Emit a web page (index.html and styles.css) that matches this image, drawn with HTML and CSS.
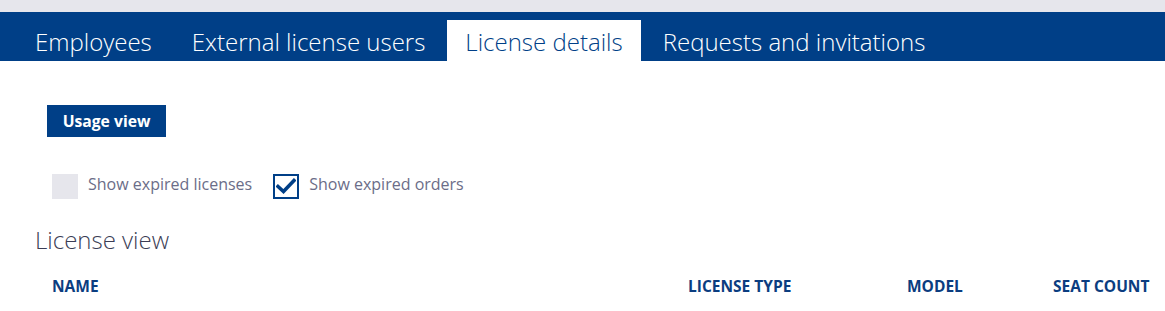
FILE: index.html
```html
<!DOCTYPE html>
<html lang="en">
<head>
    <meta charset="UTF-8">
    <meta name="viewport" content="width=device-width, initial-scale=1.0">
    <title>License details</title>
    <link rel="stylesheet" href="styles.css">
</head>
<body>
    <div class="topline"></div>
    <div class="tabs">
        <div class="tab">Employees</div>
        <div class="tab">External license users</div>
        <div class="tab active">License details</div>
        <div class="tab">Requests and invitations</div>
    </div>
    <div class="content">
        <button class="btn">Usage view</button>
        <div class="filters">
            <label class="check">
                <span class="box"></span>
                <span class="text">Show expired licenses</span>
            </label>
            <label class="check">
                <span class="box checked">
                    <svg width="20" height="16" viewBox="0 0 20 16"><path d="M2 8.5 L7.5 13.5 L18 2.5" fill="none" stroke="#003f87" stroke-width="3.6" stroke-linecap="square"/></svg>
                </span>
                <span class="text">Show expired orders</span>
            </label>
        </div>
        <h2 class="section-title">License view</h2>
        <div class="table-head">
            <div class="col col-name">NAME</div>
            <div class="col col-type">LICENSE TYPE</div>
            <div class="col col-model">MODEL</div>
            <div class="col col-seats">SEAT COUNT</div>
        </div>
    </div>
</body>
</html>
```

FILE: styles.css
```css
body {
    margin: 0;
    font-family: "Open Sans", "Noto Sans", sans-serif;
    background: #fff;
    overflow: hidden;
}
.topline {
    height: 12px;
    background: #e6e6ec;
}
.tabs {
    display: flex;
    align-items: flex-end;
    height: 49px;
    background: #003f87;
    padding-left: 17px;
    gap: 4px;
}
.tab {
    height: 41px;
    padding: 0 18px;
    color: #fff;
    font-size: 24px;
    font-weight: 300;
    line-height: 44px;
    box-sizing: border-box;
}
.tab.active {
    background: #fff;
    color: #003f87;
}
.content {
    padding: 44px 0 0 47px;
}
.btn {
    display: block;
    height: 32px;
    width: 119px;
    border: none;
    background: #003f87;
    color: #fff;
    font-family: inherit;
    font-size: 15.7px;
    font-weight: 700;
    padding: 0;
}
.filters {
    display: flex;
    gap: 21px;
    margin: 36px 0 0 5px;
}
.check {
    display: flex;
    align-items: center;
    gap: 10px;
    font-size: 16px;
    color: #6b6d88;
}
.check .text {
    margin-bottom: 4px;
}
.box {
    width: 26px;
    height: 25px;
    background: #e6e6ec;
    box-sizing: border-box;
    display: flex;
    align-items: center;
    justify-content: center;
}
.box.checked {
    background: #fff;
    border: 2.5px solid #003f87;
}
.section-title {
    margin: 25px 0 0 -12px;
    font-size: 24px;
    font-weight: 300;
    color: #3b3d55;
    line-height: 32px;
}
.table-head {
    display: flex;
    margin: 19px 0 0 5px;
    font-size: 15.5px;
    font-weight: 700;
    color: #0b3d80;
}
.col-name { width: 636px; }
.col-type { width: 219px; }
.col-model { width: 146px; }
```
